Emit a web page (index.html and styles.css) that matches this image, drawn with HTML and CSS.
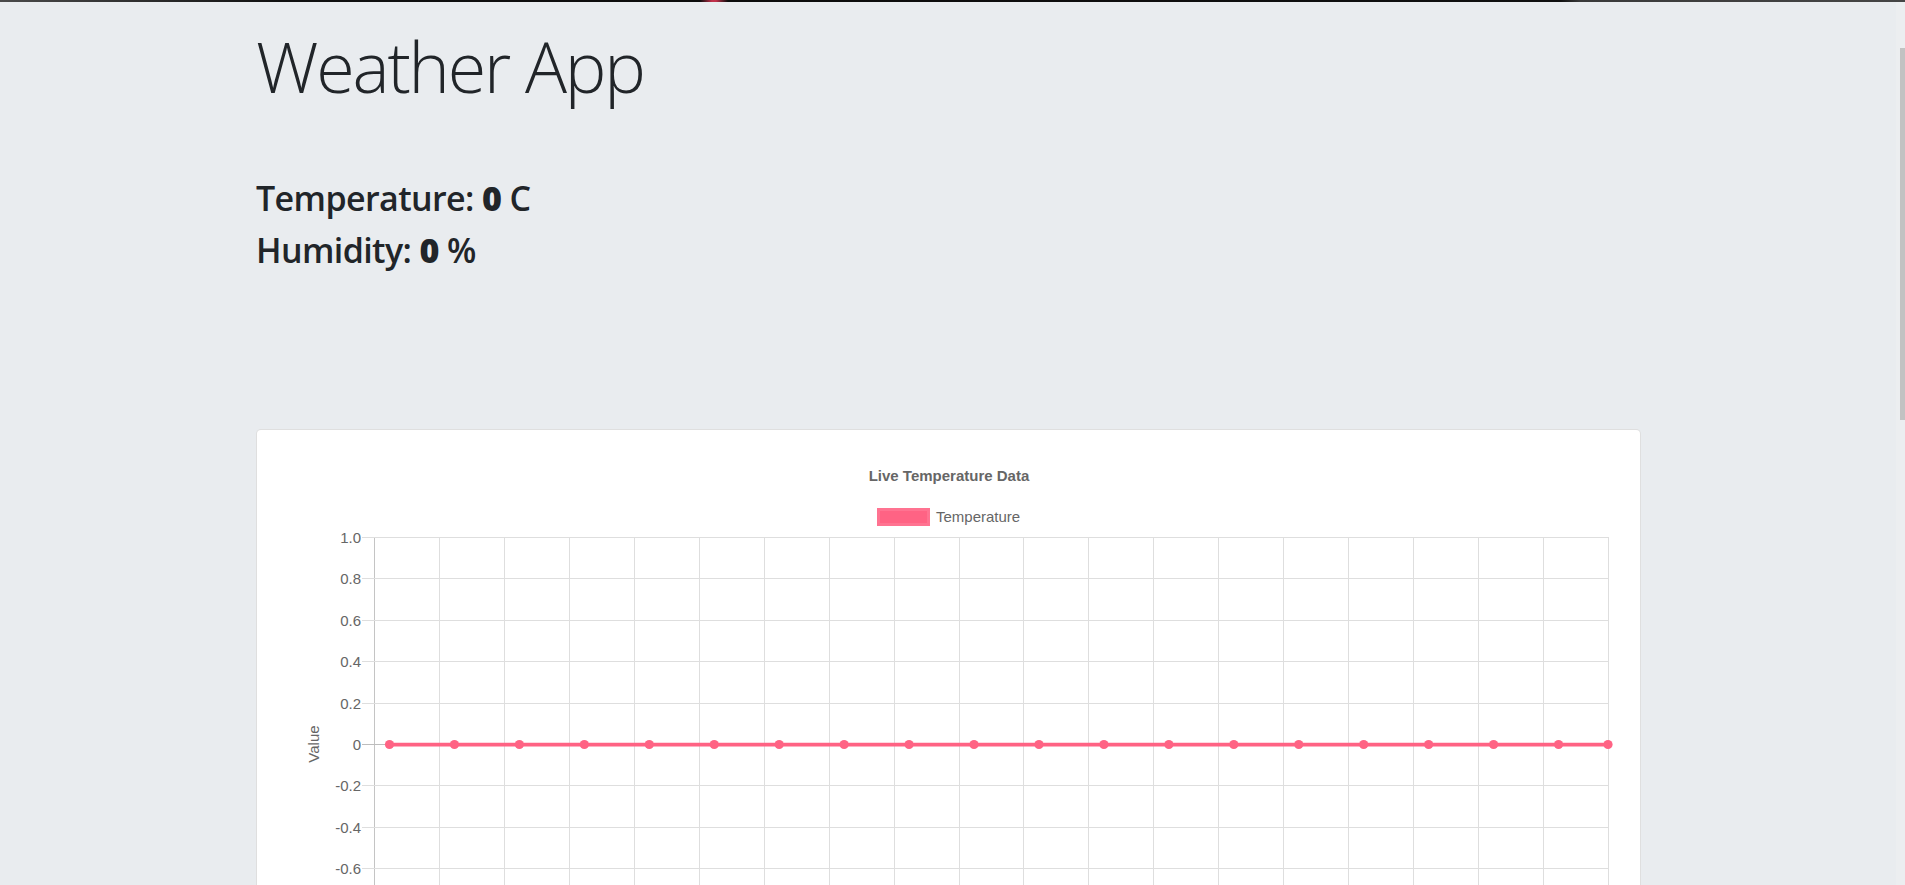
FILE: index.html
```html
<!DOCTYPE html>
<html lang="en">
<head>
<meta charset="utf-8">
<title>Weather App</title>
<link rel="stylesheet" href="styles.css">
</head>
<body>
<div class="topstrip"></div>
<main class="container">
  <h1 class="display">Weather App</h1>
  <section class="readings">
    <h3 class="reading">Temperature: <b>0</b> C</h3>
    <h3 class="reading">Humidity: <b>0</b> %</h3>
  </section>
  <div class="card">
    <div class="card-body">
      <svg class="chart" width="1383" height="460" viewBox="0 0 1383 460" xmlns="http://www.w3.org/2000/svg">
        <text class="chart-title" x="692" y="51" text-anchor="middle">Live Temperature Data</text>
        <rect x="621.5" y="79.5" width="50" height="15" fill="#ff6384" stroke="#ff7391" stroke-width="3"/>
        <text class="chart-text" x="679" y="92">Temperature</text>
        <g id="grid"></g>
        <g id="ylabels"></g>
        <text class="chart-text" transform="translate(62 314) rotate(-90)" text-anchor="middle">Value</text>
        <g id="series"></g>
      </svg>
    </div>
  </div>
</main>
<div class="scrolltrack"><div class="scrollthumb"></div></div>
<script src="chart.js"></script>
</body>
</html>
```
FILE: chart.js
```js
(function () {
  var NS = 'http://www.w3.org/2000/svg';
  function el(name, attrs, parent, text) {
    var e = document.createElementNS(NS, name);
    for (var k in attrs) e.setAttribute(k, attrs[k]);
    if (text !== undefined) e.textContent = text;
    parent.appendChild(e);
    return e;
  }
  var left = 117, right = 1351, top = 107, step = 41.4, bottom = 460;
  var grid = document.getElementById('grid');
  var labels = document.getElementById('ylabels');
  var series = document.getElementById('series');
  var ticks = ['1.0', '0.8', '0.6', '0.4', '0.2', '0', '-0.2', '-0.4', '-0.6'];
  var colW = (right - left) / 19;
  for (var i = 0; i <= 19; i++) {
    var x = Math.round(left + colW * i) + 0.5;
    el('line', { x1: x, y1: top, x2: x, y2: bottom, stroke: i === 0 ? '#c4c4c4' : '#dedede', 'stroke-width': 1 }, grid);
  }
  ticks.forEach(function (t, j) {
    var y = Math.round(top + step * j) + 0.5;
    el('line', { x1: 105, y1: y, x2: right, y2: y, stroke: t === '0' ? '#bdbdbd' : '#dedede', 'stroke-width': 1 }, grid);
    el('text', { x: 104, y: y + 5, 'text-anchor': 'end', 'class': 'chart-text' }, labels, t);
  });
  var y0 = top + step * 5 + 0.5;
  var pts = [];
  for (var p = 0; p < 19; p++) pts.push(132.5 + colW * p);
  pts.push(right);
  el('polyline', { points: pts.map(function (x) { return x + ',' + y0; }).join(' '), fill: 'none', stroke: '#ff6384', 'stroke-width': 3.75 }, series);
  pts.forEach(function (x) {
    el('circle', { cx: x, cy: y0, r: 4.6, fill: '#ff6384' }, series);
  });
})();
```
FILE: styles.css
```css
html, body {
  margin: 0;
  padding: 0;
  overflow: hidden;
}
body {
  background: #e9ecef;
  color: #212529;
  font-family: "Open Sans", "Liberation Sans", sans-serif;
  width: 1905px;
  height: 885px;
}
.topstrip {
  height: 2px;
  background: linear-gradient(90deg, #4a4a4a 0, #2e2e2e 140px, #101010 280px, #0c0c0c 700px, #c0304a 712px, #c0304a 716px, #0c0c0c 728px, #101010 1560px, #3a3a3a 1580px, #454545 1905px);
}
.container {
  width: 1385px;
  margin-left: 256px;
}
.display {
  margin: 22px 0 0;
  font-weight: 300;
  font-size: 70px;
  line-height: 84px;
  letter-spacing: -2.2px;
}
.readings {
  margin-top: 69px;
}
.reading {
  margin: 0 0 10px;
  font-size: 34px;
  line-height: 42px;
  font-weight: 600;
  letter-spacing: -0.6px;
}
.reading b {
  font-weight: 800;
}
.card {
  margin-top: 158px;
  background: #fff;
  border: 1px solid rgba(0, 0, 0, 0.125);
  border-radius: 5px;
}
.card-body {
  display: flex;
}
.chart {
  display: block;
}
.chart-title {
  font-family: "Liberation Sans", Arial, sans-serif;
  font-weight: 700;
  font-size: 15px;
  fill: #666;
}
.chart-text {
  font-family: "Liberation Sans", Arial, sans-serif;
  font-size: 15px;
  fill: #666;
}
.scrolltrack {
  position: fixed;
  top: 2px;
  right: 0;
  width: 9px;
  bottom: 0;
  background: #eceef0;
}
.scrollthumb {
  margin-top: 46px;
  margin-left: 4px;
  width: 5px;
  height: 372px;
  background: #c2c2c2;
}
```
